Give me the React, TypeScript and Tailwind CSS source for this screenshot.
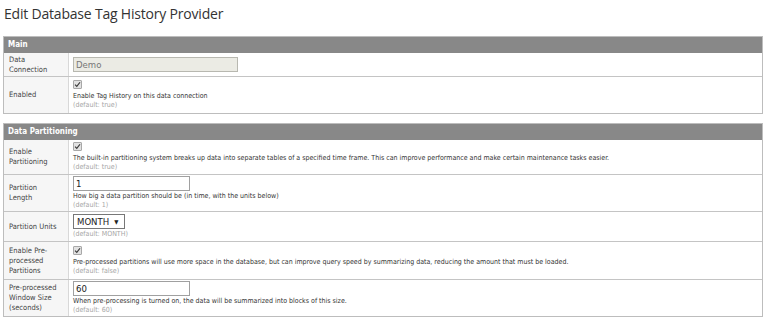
import React from "react";

type Row = {
  label: string[];
  h: string;
  kind: "text" | "check" | "input" | "select";
  value?: string;
  inputW?: string;
  disabled?: boolean;
  desc?: string;
  def?: string;
};

const mainRows: Row[] = [
  { label: ["Data", "Connection"], h: "h-[24px]", kind: "input", value: "Demo", inputW: "w-[165px]", disabled: true },
  { label: ["Enabled"], h: "h-[36px]", kind: "check", desc: "Enable Tag History on this data connection", def: "(default: true)" },
];

const partRows: Row[] = [
  {
    label: ["Enable", "Partitioning"],
    h: "h-[35px]",
    kind: "check",
    desc: "The built-in partitioning system breaks up data into separate tables of a specified time frame. This can improve performance and make certain maintenance tasks easier.",
    def: "(default: true)",
  },
  {
    label: ["Partition", "Length"],
    h: "h-[37px]",
    kind: "input",
    value: "1",
    inputW: "w-[117px]",
    desc: "How big a data partition should be (in time, with the units below)",
    def: "(default: 1)",
  },
  { label: ["Partition Units"], h: "h-[30px]", kind: "select", value: "MONTH", def: "(default: MONTH)" },
  {
    label: ["Enable Pre-", "processed", "Partitions"],
    h: "h-[38px]",
    kind: "check",
    desc: "Pre-processed partitions will use more space in the database, but can improve query speed by summarizing data, reducing the amount that must be loaded.",
    def: "(default: false)",
  },
  {
    label: ["Pre-processed", "Window Size", "(seconds)"],
    h: "h-[36px]",
    kind: "input",
    value: "60",
    inputW: "w-[117px]",
    desc: "When pre-processing is turned on, the data will be summarized into blocks of this size.",
    def: "(default: 60)",
  },
];

function Checkbox() {
  return (
    <span className="flex h-[9px] w-[9px] items-center justify-center rounded-[1px] border border-[#a8a8a8] bg-[#e2e2e2]">
      <svg viewBox="0 0 10 10" className="h-[7px] w-[7px]">
        <path d="M1.5 5.2 L4 7.8 L8.6 1.8" fill="none" stroke="#3a3a3a" strokeWidth="1.7" />
      </svg>
    </span>
  );
}

function FieldRow({ row, last }: { row: Row; last: boolean }) {
  return (
    <div className={`flex ${row.h} ${last ? "" : "border-b border-[#c4c4c4]"}`}>
      <div className="flex w-[65px] shrink-0 flex-col justify-center border-r border-[#d8d8d8] bg-[#f6f6f6] pl-[5px] text-[7.5px] leading-[10px] text-[#444]">
        {row.label.map((l) => (
          <span key={l}>{l}</span>
        ))}
      </div>
      <div className="flex flex-1 flex-col justify-center pl-[4px] leading-[9px] text-[#333]">
        {row.kind === "check" && (
          <div className="mb-[2px] h-[10px]">
            <Checkbox />
          </div>
        )}
        {row.kind === "input" && (
          <div
            className={`mb-[1px] flex h-[15px] ${row.inputW} items-center border px-[2px] text-[9.5px] ${
              row.disabled ? "border-[#b8b8b0] bg-[#ebebe4] text-[#777]" : "border-[#a0a0a0] bg-white text-[#222]"
            }`}
          >
            {row.value}
          </div>
        )}
        {row.kind === "select" && (
          <div className="mb-[1px] flex h-[15px] w-[52px] items-center gap-[5px] border border-[#777] bg-white px-[3px] text-[9.5px] text-[#222]">
            <span>{row.value}</span>
            <span className="text-[6px]">▼</span>
          </div>
        )}
        {row.desc && <span>{row.desc}</span>}
        {row.def && <span className="text-[#a6a6a6]">{row.def}</span>}
      </div>
    </div>
  );
}

function Section({ title, rows }: { title: string; rows: Row[] }) {
  return (
    <div className="border border-[#bdbdbd]">
      <div className="flex h-[16px] items-center bg-[#888888] pl-[4px] text-[8px] font-bold text-white">{title}</div>
      {rows.map((r, i) => (
        <FieldRow key={r.label.join(" ")} row={r} last={i === rows.length - 1} />
      ))}
    </div>
  );
}

export default function App() {
  return (
    <div className="h-[320px] w-[768px] overflow-hidden bg-white pl-[3px] pr-[5px] pt-[3px] font-['DejaVu_Sans_Condensed','DejaVu_Sans',sans-serif] text-[7px]">
      <h1 className="mb-[12px] h-[21px] pl-[1px] font-['Open_Sans',sans-serif] text-[14px] leading-[21px] tracking-[-0.2px] text-[#333]">
        Edit Database Tag History Provider
      </h1>
      <div className="flex flex-col gap-[9px]">
        <Section title="Main" rows={mainRows} />
        <Section title="Data Partitioning" rows={partRows} />
      </div>
    </div>
  );
}
